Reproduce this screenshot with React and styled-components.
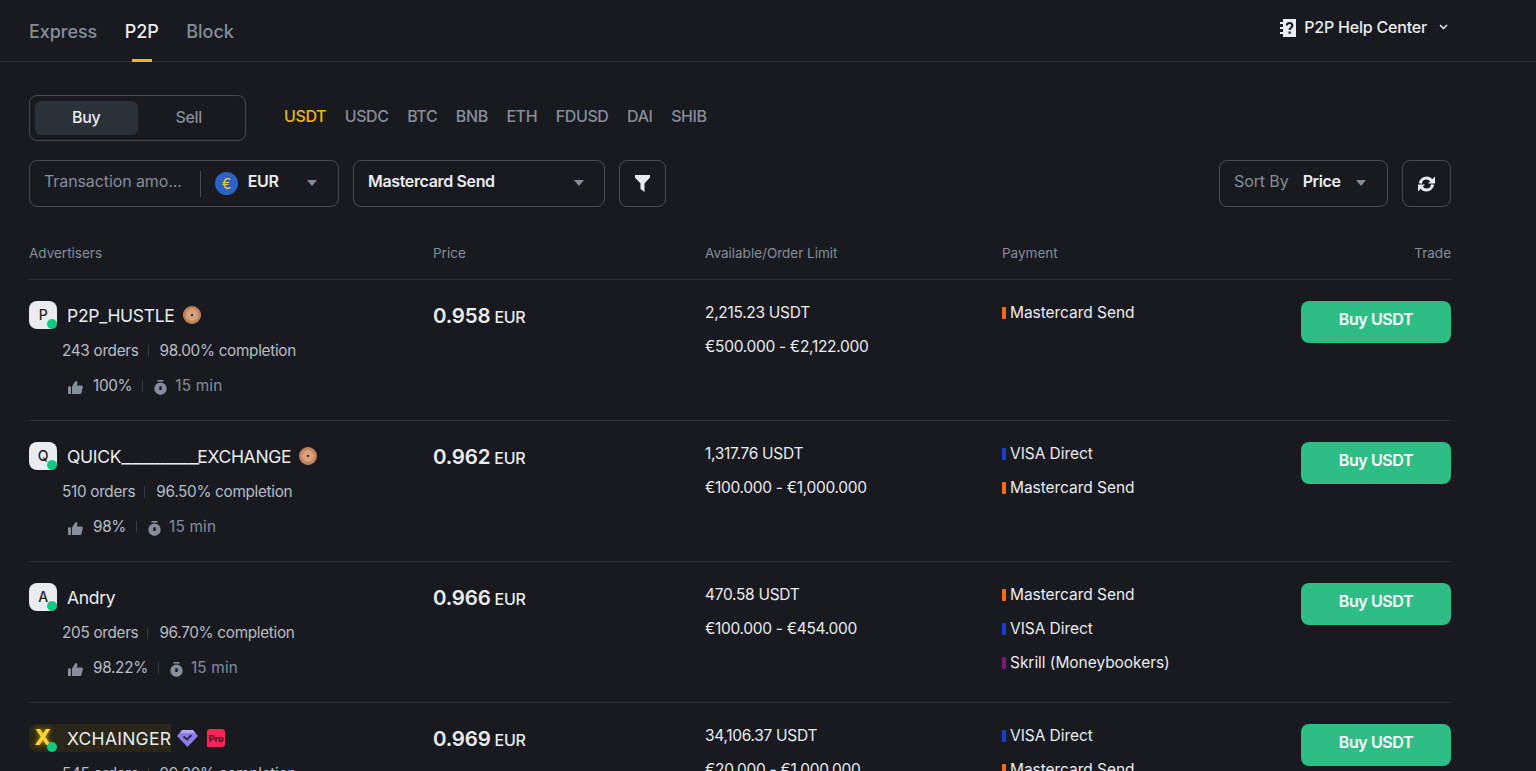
import React from 'react';
import styled, { createGlobalStyle } from 'styled-components';

const GlobalStyle = createGlobalStyle`
  html, body {
    margin: 0;
    height: 771px;
    overflow: hidden;
    background: #181a20;
    color: #eaecef;
    font-family: 'Inter', 'Roboto', sans-serif;
  }
  * { box-sizing: border-box; }
`;

const Header = styled.header`
  height: 62px;
  display: flex;
  justify-content: space-between;
  padding: 0 88px 0 29px;
  border-bottom: 1px solid #2b2f36;
`;

const Tabs = styled.nav`
  display: flex;
  gap: 27.5px;
`;

const Tab = styled.div`
  position: relative;
  padding-top: 20px;
  font-size: 18px;
  line-height: 24px;
  font-weight: 500;
  letter-spacing: -0.05px;
  color: ${props => (props.$active ? '#eaecef' : '#848e9c')};

  ${props => props.$active && `
    &::after {
      content: '';
      position: absolute;
      left: 7px;
      right: 7px;
      bottom: -1px;
      height: 3px;
      background: #f0b90b;
    }
  `}
`;

const HelpLink = styled.div`
  display: flex;
  align-items: flex-start;
  padding-top: 17px;
  font-size: 16px;
  line-height: 20px;
  font-weight: 500;
  letter-spacing: -0.2px;
  color: #eaecef;

  svg:first-child { margin: 2px 8px 0 0; }
  svg:last-child { margin: 7px 0 0 12px; }
`;

const Main = styled.main`
  padding: 33px 85px 0 29px;
`;

const TopRow = styled.div`
  display: flex;
  align-items: center;
  gap: 38px;
`;

const SideSwitch = styled.div`
  width: 217px;
  height: 46px;
  padding: 5px;
  display: flex;
  border: 1px solid #474d57;
  border-radius: 8px;
`;

const SideOption = styled.div`
  width: 103px;
  padding-bottom: 3px;
  display: flex;
  align-items: center;
  justify-content: center;
  border-radius: 6px;
  font-size: 16px;
  font-weight: 500;
  letter-spacing: -0.3px;
  background: ${props => (props.$active ? '#2b3139' : 'transparent')};
  color: ${props => (props.$active ? '#eaecef' : '#848e9c')};
`;

const Coins = styled.div`
  display: flex;
  gap: 18.6px;
  padding-bottom: 4px;
`;

const Coin = styled.span`
  font-size: 16px;
  font-weight: 500;
  letter-spacing: -0.4px;
  color: ${props => (props.$active ? '#f0b90b' : '#848e9c')};
`;

const FilterRow = styled.div`
  display: flex;
  align-items: center;
  gap: 14px;
  margin-top: 19px;
`;

const Field = styled.div`
  width: ${props => props.$width}px;
  height: 47px;
  display: flex;
  align-items: center;
  padding: 0 ${props => props.$pr || 14}px 5px 14px;
  border: 1px solid #474d57;
  border-radius: 8px;
  font-size: 16px;
  font-weight: 600;
  letter-spacing: -0.35px;
  color: #eaecef;
`;

const SquareButton = styled(Field)`
  justify-content: center;
  padding: 0;
`;

const Placeholder = styled.span`
  color: #848e9c;
  font-weight: 400;
  white-space: nowrap;
  letter-spacing: -0.1px;
`;

const VLine = styled.span`
  width: 1px;
  height: 26px;
  margin: 5px 14px 0 18px;
  background: #474d57;
`;

const EuroIcon = styled.span`
  width: 23px;
  height: 23px;
  margin: 5px 10px 0 0;
  display: flex;
  align-items: center;
  justify-content: center;
  border-radius: 50%;
  background: #2a63c4;
  color: #f0c93c;
  font-size: 14px;
  font-weight: 400;
`;

const Caret = styled.span`
  width: 0;
  height: 0;
  margin: 4px 0 0 auto;
  border-left: 5px solid transparent;
  border-right: 5px solid transparent;
  border-top: 6px solid #848e9c;
`;

const RightGroup = styled.div`
  margin-left: auto;
  display: flex;
  gap: 14px;
`;

const SortLabel = styled.span`
  margin-right: 14px;
  color: #848e9c;
  font-weight: 400;
  letter-spacing: -0.1px;
`;

const TableRow = styled.div`
  display: grid;
  grid-template-columns: 404px 272px 297px 1fr 150px;
  border-bottom: 1px solid #2b2f36;
`;

const HeadRow = styled(TableRow)`
  height: 73px;
  padding-top: 37px;
  font-size: 13.5px;
  line-height: 18px;
  color: #848e9c;
`;

const HeadCell = styled.div`
  text-align: ${props => (props.$right ? 'right' : 'left')};
`;

const AdRow = styled(TableRow)`
  height: 141px;
  padding-top: 21px;
`;

const NameLine = styled.div`
  display: flex;
  align-items: center;
  height: 28px;
  width: max-content;
  font-size: 17.5px;
  letter-spacing: ${props => (props.$highlight ? 0.25 : -0.3)}px;
  color: #eaecef;
`;

const NameBox = styled.div`
  display: flex;
  align-items: center;
  height: 28px;
  background: ${props => (props.$highlight ? '#2b2718' : 'transparent')};
  border-radius: 8px 0 0 8px;
`;

const Underscores = styled.span`
  display: inline-block;
  width: 76px;
  letter-spacing: 0;
  transform: scaleX(1.4);
  transform-origin: left center;
`;

const Avatar = styled.div`
  position: relative;
  width: 28px;
  height: 28px;
  margin-right: 10px;
  padding-bottom: 2px;
  display: flex;
  align-items: center;
  justify-content: center;
  border-radius: 8px;
  background: ${props => (props.$highlight ? 'transparent' : '#eaecef')};
  color: ${props => (props.$highlight ? '#fcd535' : '#1e2329')};
  font-size: ${props => (props.$highlight ? 22 : 14)}px;
  font-weight: ${props => (props.$highlight ? 800 : 500)};
  text-shadow: ${props => (props.$highlight ? '0 0 5px #c8a000' : 'none')};

  &::after {
    content: '';
    position: absolute;
    right: 0;
    bottom: 0;
    width: 10px;
    height: 10px;
    border-radius: 50%;
    background: #0ecb81;
  }
`;

const Medal = styled.span`
  width: 18px;
  height: 18px;
  margin-left: 8px;
  border-radius: 50%;
  background: radial-gradient(circle, #3a2a20 0 9%, #d9a27c 12% 38%, #b97d55 60%, #e5c4a8 100%);
`;

const ProBadge = styled.span`
  width: 18px;
  height: 18px;
  margin-left: 9px;
  display: flex;
  align-items: center;
  justify-content: center;
  border-radius: 3px 3px 3px 0;
  background: #f6265a;
  color: #3a1018;
  font-size: 9px;
  font-weight: 700;
  letter-spacing: 0;
`;

const Stats = styled.div`
  display: flex;
  align-items: center;
  margin-top: ${props => props.$top}px;
  padding-left: ${props => props.$indent}px;
  font-size: 15.3px;
  line-height: 20px;
  letter-spacing: -0.3px;
  color: #b7bdc6;
`;

const Muted = styled.span`
  color: #848e9c;
  letter-spacing: 0.2px;
`;

const Sep = styled.span`
  width: 1px;
  height: 12px;
  margin: 0 ${props => props.$right || 11}px 0 ${props => props.$left || 9}px;
  background: #333942;
`;

const StatIcon = styled.svg`
  width: 15px;
  height: 15px;
  margin: 2px ${props => props.$gap}px 0 0;
  fill: #848e9c;
`;

const Price = styled.div`
  padding-top: 2px;
  font-size: 16px;
  line-height: 26px;
  font-weight: 500;
  color: #eaecef;
  letter-spacing: -0.3px;

  b {
    margin-right: 4px;
    font-size: 20.5px;
    font-weight: 600;
    letter-spacing: -0.2px;
  }
`;

const Lines = styled.div`
  display: flex;
  flex-direction: column;
  gap: 14.4px;
  padding-top: 1.5px;
  font-size: 15.5px;
  line-height: 20px;
  letter-spacing: -0.3px;
  color: #eaecef;
`;

const Payment = styled.div`
  display: flex;
  align-items: center;
  gap: 4px;
  font-size: 15.5px;
  line-height: 20px;
  letter-spacing: -0.05px;
  color: #eaecef;

  &::before {
    content: '';
    width: 4px;
    height: 12px;
    border-radius: 1px;
    background: ${props => props.$color};
  }
`;

const BuyButton = styled.button`
  width: 150px;
  height: 42px;
  margin-top: 0.4px;
  padding: 0 0 6px;
  border: 0;
  border-radius: 8px;
  background: #2ebd85;
  color: #fff;
  font-family: inherit;
  font-size: 16px;
  font-weight: 600;
  letter-spacing: -0.4px;
`;

const PAY = {
  master: ['Mastercard Send', '#ff6a13'],
  visa: ['VISA Direct', '#1a3fd0'],
  skrill: ['Skrill (Moneybookers)', '#7a1a78'],
};

const ads = [
  { letter: 'P', name: 'P2P_HUSTLE', orders: '243 orders', rate: '98.00% completion', like: '100%', price: '0.958', avail: '2,215.23 USDT', limit: '€500.000 - €2,122.000', pays: ['master'], medal: true },
  { letter: 'Q', name: <>QUICK<Underscores>_______</Underscores>EXCHANGE</>, orders: '510 orders', rate: '96.50% completion', like: '98%', price: '0.962', avail: '1,317.76 USDT', limit: '€100.000 - €1,000.000', pays: ['visa', 'master'], medal: true },
  { letter: 'A', name: 'Andry', orders: '205 orders', rate: '96.70% completion', like: '98.22%', price: '0.966', avail: '470.58 USDT', limit: '€100.000 - €454.000', pays: ['master', 'visa', 'skrill'] },
  { letter: 'X', name: 'XCHAINGER', orders: '545 orders', rate: '99.20% completion', like: '99%', price: '0.969', avail: '34,106.37 USDT', limit: '€20.000 - €1,000.000', pays: ['visa', 'master'], vip: true },
];

const HelpIcon = () => (
  <svg width="16" height="18" viewBox="0 0 16 18">
    <path fill="#eaecef" d="M3 0h13v18H3z" />
    <path fill="#eaecef" d="M0 3h4v2H0zM0 8h4v2H0zM0 13h4v2H0z" />
    <path fill="none" stroke="#181a20" strokeWidth="2" d="M6.800 6.500c0-3.400 5.600-3.400 5.600 0 0 2.200-2.800 2-2.800 4.500" />
    <path fill="#181a20" d="M8.500 12.500h2.200v2.200H8.500z" />
  </svg>
);

const Chevron = () => (
  <svg width="9" height="6" viewBox="0 0 9 6">
    <path fill="none" stroke="#eaecef" strokeWidth="1.500" d="M1 1l3.500 3.500L8 1" />
  </svg>
);

const FunnelIcon = () => (
  <svg width="15" height="17" viewBox="0 0 15 17">
    <path fill="#eaecef" d="M0 0h15v2.600L9.500 8.600V17L5.500 14V8.600L0 2.600z" />
  </svg>
);

const RefreshIcon = () => (
  <svg width="17" height="18" viewBox="0 0 17 18">
    <path fill="none" stroke="#eaecef" strokeWidth="3" d="M2.400 8.500C2.800 5.200 5.300 3 8.500 3c2.200 0 4 1 5 2.800" />
    <path fill="#eaecef" d="M17 1.500V8.500H10z" />
    <path fill="none" stroke="#eaecef" strokeWidth="3" d="M14.600 9.500C14.200 12.800 11.700 15 8.500 15c-2.200 0-4-1-5-2.800" />
    <path fill="#eaecef" d="M0 16.500V9.500H7z" />
  </svg>
);

const ThumbIcon = () => (
  <StatIcon $gap={10} viewBox="0 0 15 15">
    <path d="M0 6.500h3V14H0zM4 6.500 7.500 1c1.600 0 2.200 1 1.900 2.300L9 5.500h4.500c1 0 1.500.8 1.300 1.700l-1.300 5.600c-.2.800-.8 1.200-1.500 1.200H4z" />
  </StatIcon>
);

const TimerIcon = () => (
  <StatIcon $gap={7} viewBox="0 0 15 15">
    <path d="M4.500 0h6v1.600h-6z" />
    <path fillRule="evenodd" d="M7.500 2.500a6.200 6.200 0 1 1 0 12.400 6.200 6.200 0 0 1 0-12.400zM6.300 6.200v3.800h2.400V6.200z" />
  </StatIcon>
);

const Gem = styled.svg`
  width: 21px;
  height: 20px;
  margin-left: 6px;
`;

const DiamondIcon = () => (
  <Gem viewBox="0 0 21 20">
    <path fill="#8f7be8" d="M5 2h11l5 6-10.500 11L0 8z" />
    <path fill="#b5a6f5" d="M5 2h11l2 3H3z" />
    <path fill="none" stroke="#2a2450" strokeWidth="2" d="M6.500 8.500l3.500 3L14.500 7" />
  </Gem>
);

const Advertiser = ({ ad }) => (
  <div>
    <NameLine $highlight={ad.vip}>
      <NameBox $highlight={ad.vip}>
        <Avatar $highlight={ad.vip}>{ad.letter}</Avatar>
        {ad.name}
      </NameBox>
      {ad.medal && <Medal />}
      {ad.vip && <DiamondIcon />}
      {ad.vip && <ProBadge>Pro</ProBadge>}
    </NameLine>
    <Stats $top={12} $indent={33}>
      {ad.orders}
      <Sep />
      {ad.rate}
    </Stats>
    <Stats $top={15} $indent={39}>
      <ThumbIcon />
      {ad.like}
      <Sep $left={10} $right={10} />
      <TimerIcon />
      <Muted>15 min</Muted>
    </Stats>
  </div>
);

const App = () => (
  <>
    <GlobalStyle />
    <Header>
      <Tabs>
        <Tab>Express</Tab>
        <Tab $active>P2P</Tab>
        <Tab>Block</Tab>
      </Tabs>
      <HelpLink>
        <HelpIcon />
        P2P Help Center
        <Chevron />
      </HelpLink>
    </Header>
    <Main>
      <TopRow>
        <SideSwitch>
          <SideOption $active>Buy</SideOption>
          <SideOption>Sell</SideOption>
        </SideSwitch>
        <Coins>
          {['USDT', 'USDC', 'BTC', 'BNB', 'ETH', 'FDUSD', 'DAI', 'SHIB'].map((coin, i) => (
            <Coin key={coin} $active={i === 0}>{coin}</Coin>
          ))}
        </Coins>
      </TopRow>
      <FilterRow>
        <Field $width={310} $pr={21}>
          <Placeholder>Transaction amo...</Placeholder>
          <VLine />
          <EuroIcon>€</EuroIcon>
          EUR
          <Caret />
        </Field>
        <Field $width={252} $pr={20}>
          Mastercard Send
          <Caret />
        </Field>
        <SquareButton $width={47}>
          <FunnelIcon />
        </SquareButton>
        <RightGroup>
          <Field $width={169} $pr={21}>
            <SortLabel>Sort By</SortLabel>
            Price
            <Caret />
          </Field>
          <SquareButton $width={49}>
            <RefreshIcon />
          </SquareButton>
        </RightGroup>
      </FilterRow>
      <HeadRow>
        <HeadCell>Advertisers</HeadCell>
        <HeadCell>Price</HeadCell>
        <HeadCell>Available/Order Limit</HeadCell>
        <HeadCell>Payment</HeadCell>
        <HeadCell $right>Trade</HeadCell>
      </HeadRow>
      {ads.map(ad => (
        <AdRow key={ad.letter}>
          <Advertiser ad={ad} />
          <Price><b>{ad.price}</b>EUR</Price>
          <Lines>
            <div>{ad.avail}</div>
            <div>{ad.limit}</div>
          </Lines>
          <Lines>
            {ad.pays.map(key => (
              <Payment key={key} $color={PAY[key][1]}>{PAY[key][0]}</Payment>
            ))}
          </Lines>
          <div>
            <BuyButton>Buy USDT</BuyButton>
          </div>
        </AdRow>
      ))}
    </Main>
  </>
);

export default App;
